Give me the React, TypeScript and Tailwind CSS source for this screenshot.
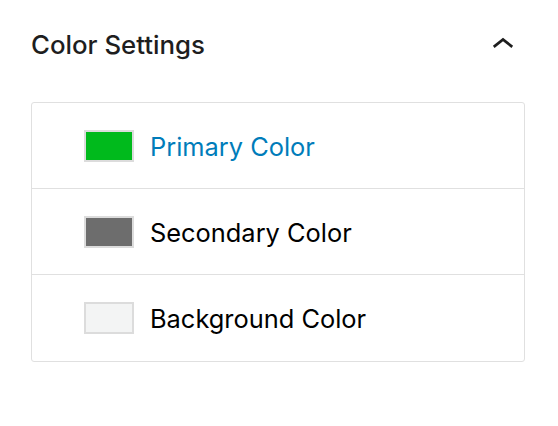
import React from "react";

const rows = [
  { label: "Primary Color", color: "bg-[#00ba1c]", active: true },
  { label: "Secondary Color", color: "bg-[#6d6d6d]", active: false },
  { label: "Background Color", color: "bg-[#f3f4f4]", active: false },
];

export default function App() {
  return (
    <div
      className="w-[558px] h-[426px] bg-white pl-[31px] pr-[33px]"
      style={{ fontFamily: "Inter, 'Liberation Sans', sans-serif" }}
    >
      <div className="h-[102px] pt-[23px]">
        <div className="flex items-center justify-between h-[44px]">
          <span className="text-[25.8px] font-medium text-[#1e1e1e]">Color Settings</span>
          <svg width="44" height="44" viewBox="0 0 24 24" className="text-[#1e1e1e]">
            <path d="M6.5 12.4L12 8l5.5 4.4-.9 1.2L12 10l-4.6 3.6-.9-1.2z" fill="currentColor" />
          </svg>
        </div>
      </div>
      <div className="border border-[#e0e0e0] rounded-[3px]">
        {rows.map((r, i) => (
          <div
            key={r.label}
            className={`h-[86px] flex items-center pl-[52px] ${i < rows.length - 1 ? "border-b border-[#e0e0e0]" : "h-[85px]"}`}
          >
            <div className={`w-[50px] h-[32px] border-2 border-[#dcdcdc] ${r.color}`} />
            <span
              className={`ml-[16px] text-[25.4px] leading-[32px] pt-[2px] ${r.active ? "text-[#007cba]" : "text-black"}`}
            >
              {r.label}
            </span>
          </div>
        ))}
      </div>
    </div>
  );
}
